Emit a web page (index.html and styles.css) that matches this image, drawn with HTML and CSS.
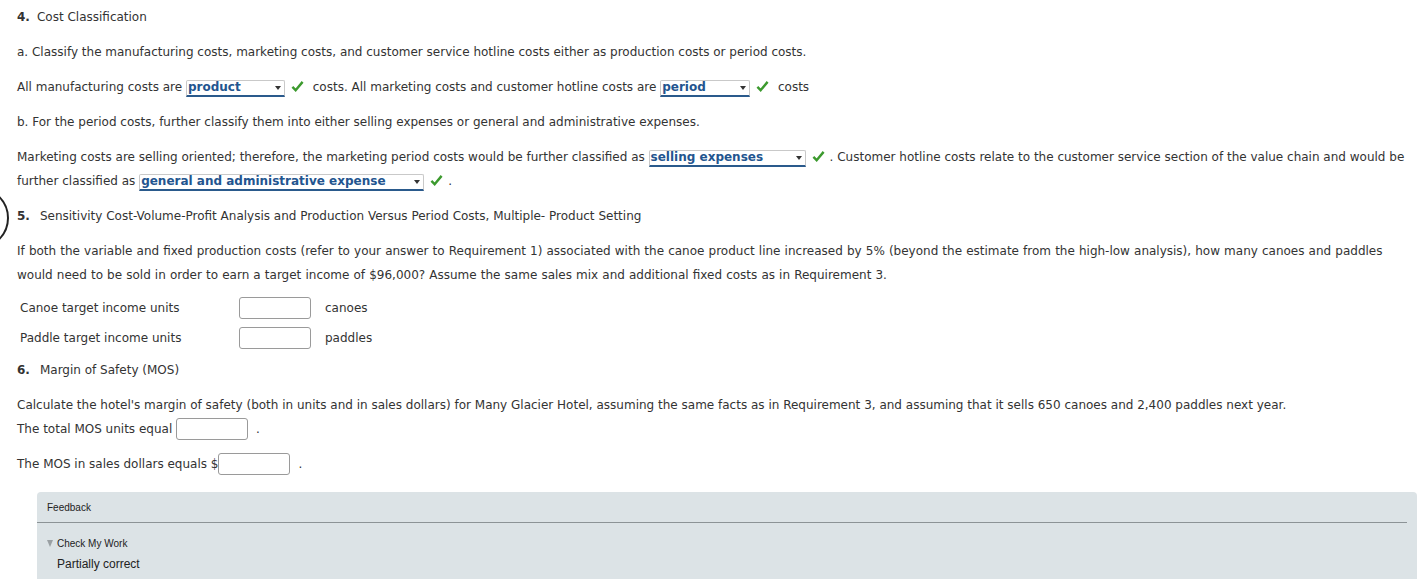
FILE: index.html
```html
<!DOCTYPE html>
<html>
<head>
<meta charset="utf-8">
<link rel="stylesheet" href="styles.css">
</head>
<body>
<div class="arc"></div>
<div class="page">
  <div class="line"><span class="num">4.</span><span class="gap4"></span>Cost Classification</div>
  <div class="line sp">a. Classify the manufacturing costs, marketing costs, and customer service hotline costs either as production costs or period costs.</div>
  <div class="line sp">All manufacturing costs are <span class="sel w-product">product<span class="arrow"></span></span><span class="chk"><svg viewBox="0 0 14 14" width="13" height="13"><path d="M1.5 7.5 L5 11 L12.5 2" fill="none" stroke="#3c9a2e" stroke-width="2.6"/></svg></span> costs. All marketing costs and customer hotline costs are <span class="sel w-period">period<span class="arrow"></span></span><span class="chk"><svg viewBox="0 0 14 14" width="13" height="13"><path d="M1.5 7.5 L5 11 L12.5 2" fill="none" stroke="#3c9a2e" stroke-width="2.6"/></svg></span> costs</div>
  <div class="line sp">b. For the period costs, further classify them into either selling expenses or general and administrative expenses.</div>
  <div class="para sp">Marketing costs are selling oriented; therefore, the marketing period costs would be further classified as <span class="sel w-selling">selling expenses<span class="arrow"></span></span><span class="chk"><svg viewBox="0 0 14 14" width="13" height="13"><path d="M1.5 7.5 L5 11 L12.5 2" fill="none" stroke="#3c9a2e" stroke-width="2.6"/></svg></span>. Customer hotline costs relate to the customer service section of the value chain and would be further classified as <span class="sel w-general">general and administrative expense<span class="arrow"></span></span><span class="chk"><svg viewBox="0 0 14 14" width="13" height="13"><path d="M1.5 7.5 L5 11 L12.5 2" fill="none" stroke="#3c9a2e" stroke-width="2.6"/></svg></span>.</div>
  <div class="line sp"><span class="num">5.</span><span class="gap5"></span>Sensitivity Cost-Volume-Profit Analysis and Production Versus Period Costs, Multiple- Product Setting</div>
  <div class="para wide sp">If both the variable and fixed production costs (refer to your answer to Requirement 1) associated with the canoe product line increased by 5% (beyond the estimate from the high-low analysis), how many canoes and paddles would need to be sold in order to earn a target income of $96,000? Assume the same sales mix and additional fixed costs as in Requirement 3.</div>
  <div class="rows">
    <div class="row"><span class="lbl">Canoe target income units</span><span class="box"></span><span class="unit">canoes</span></div>
    <div class="row"><span class="lbl">Paddle target income units</span><span class="box"></span><span class="unit">paddles</span></div>
  </div>
  <div class="line sp6"><span class="num">6.</span><span class="gap5"></span>Margin of Safety (MOS)</div>
  <div class="line sp">Calculate the hotel's margin of safety (both in units and in sales dollars) for Many Glacier Hotel, assuming the same facts as in Requirement 3, and assuming that it sells 650 canoes and 2,400 paddles next year.</div>
  <div class="line">The total MOS units equal <span class="box inl"></span><span class="dot">.</span></div>
  <div class="line sp">The MOS in sales dollars equals $<span class="box inl"></span><span class="dot">.</span></div>
</div>
<div class="feedback">
  <div class="fb-title">Feedback</div>
  <div class="fb-rule"></div>
  <div class="fb-check"><span class="tri"></span>Check My Work</div>
  <div class="fb-result">Partially correct</div>
</div>
</body>
</html>
```

FILE: styles.css
```css
html, body {
  margin: 0;
  padding: 0;
  background: #ffffff;
}
body {
  font-family: "DejaVu Sans", Verdana, sans-serif;
  font-size: 12px;
  color: #333333;
  position: relative;
  overflow: hidden;
  height: 579px;
}
.page {
  padding: 5px 0 0 17px;
}
.line {
  line-height: 24px;
  height: 24px;
  white-space: nowrap;
}
.para {
  line-height: 24px;
  padding-right: 4px;
}
.para.wide {
  word-spacing: 0.3px;
}
.sp { margin-top: 11px; }
.sp6 { margin-top: 5px; }
.num { font-weight: bold; }
.gap4 { display: inline-block; width: 7px; }
.gap5 { display: inline-block; width: 10px; }
.sel {
  display: inline-block;
  position: relative;
  box-sizing: border-box;
  height: 17px;
  line-height: 13px;
  vertical-align: baseline;
  border: 1px solid #c9c9c9;
  border-bottom: 2px solid #2a5a8c;
  border-radius: 2px 2px 0 0;
  color: #23558f;
  font-weight: bold;
  padding-left: 1px;
  text-align: left;
}
.arrow {
  position: absolute;
  right: 3px;
  top: 5px;
  width: 0;
  height: 0;
  border-left: 3px solid transparent;
  border-right: 3px solid transparent;
  border-top: 4px solid #333;
}
.w-product { width: 99px; }
.w-period { width: 90px; }
.w-selling { width: 157px; }
.w-general { width: 285px; }
.chk {
  display: inline-block;
  width: 13px;
  height: 13px;
  margin: 0 5px 0 6px;
  vertical-align: -2px;
}
.chk svg { display: block; }
.rows {
  margin-top: 6px;
  padding-left: 3px;
}
.row {
  height: 30px;
  display: flex;
  align-items: center;
}
.lbl { width: 219px; }
.box {
  display: inline-block;
  box-sizing: border-box;
  width: 72px;
  height: 22px;
  border: 1px solid #9a9a9a;
  border-radius: 3px;
  background: #fff;
}
.unit { margin-left: 14px; }
.box.inl {
  vertical-align: middle;
  margin-top: -2px;
}
.dot { margin-left: 8px; }
.arc {
  position: absolute;
  left: -53px;
  top: 187px;
  width: 58px;
  height: 58px;
  border: 2px solid #222;
  border-radius: 50%;
}
.feedback {
  position: absolute;
  left: 37px;
  right: 1px;
  top: 492px;
  bottom: -10px;
  background: #dce3e6;
  border-radius: 4px;
  font-family: "Liberation Sans", Arial, sans-serif;
  color: #222;
}
.fb-title {
  font-size: 10px;
  padding: 10px 0 0 10px;
  height: 20px;
}
.fb-rule {
  margin-right: 10px;
  border-top: 1px solid #8c9396;
}
.fb-check {
  font-size: 10px;
  padding: 15px 0 0 10px;
  height: 12px;
  line-height: 12px;
}
.tri {
  display: inline-block;
  width: 0;
  height: 0;
  border-left: 3px solid transparent;
  border-right: 3px solid transparent;
  border-top: 7px solid #9aa0a3;
  margin-right: 4px;
  vertical-align: 0;
}
.fb-result {
  font-size: 12px;
  padding: 7px 0 0 20px;
}
```
